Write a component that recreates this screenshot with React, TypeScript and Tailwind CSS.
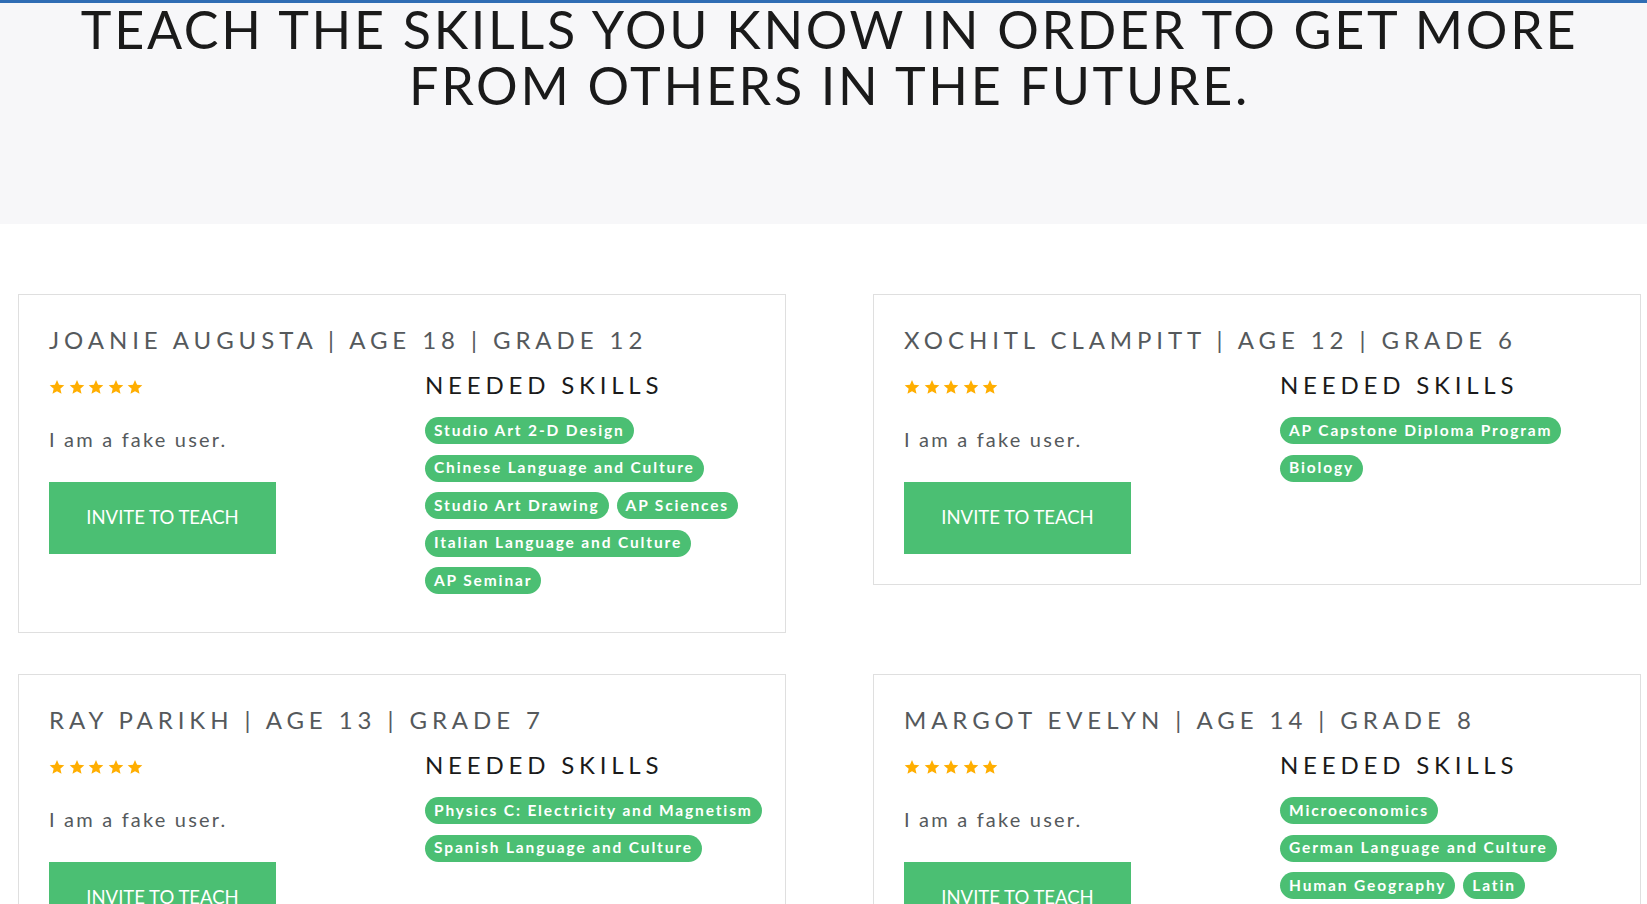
import React from "react";

interface Student {
  name: string;
  age: number;
  grade: number;
  bio: string;
  skills: string[];
}

const students: Student[] = [
  {
    name: "Joanie Augusta",
    age: 18,
    grade: 12,
    bio: "I am a fake user.",
    skills: [
      "Studio Art 2-D Design",
      "Chinese Language and Culture",
      "Studio Art Drawing",
      "AP Sciences",
      "Italian Language and Culture",
      "AP Seminar",
    ],
  },
  {
    name: "Xochitl Clampitt",
    age: 12,
    grade: 6,
    bio: "I am a fake user.",
    skills: ["AP Capstone Diploma Program", "Biology"],
  },
  {
    name: "Ray Parikh",
    age: 13,
    grade: 7,
    bio: "I am a fake user.",
    skills: ["Physics C: Electricity and Magnetism", "Spanish Language and Culture"],
  },
  {
    name: "Margot Evelyn",
    age: 14,
    grade: 8,
    bio: "I am a fake user.",
    skills: [
      "Microeconomics",
      "German Language and Culture",
      "Human Geography",
      "Latin",
    ],
  },
];

function Stars() {
  return (
    <div className="flex gap-[3.5px]">
      {[0, 1, 2, 3, 4].map((i) => (
        <svg key={i} width="16" height="16" viewBox="0 0 24 24" className="fill-[#ffae00]">
          <path d="M12 1.5l3.09 7.26 7.86.68-5.96 5.17 1.79 7.69L12 18.2l-6.78 4.1 1.79-7.69L1.05 9.44l7.86-.68z" />
        </svg>
      ))}
    </div>
  );
}

function StudentCard({ s }: { s: Student }) {
  return (
    <div className="border border-[#dfdfdf] bg-white px-[30px] pt-[30px] pb-[30px]">
      <h3 className="text-[24px] leading-[29px] uppercase tracking-[0.205em] text-[#55595c] whitespace-nowrap">
        {s.name} | Age {s.age} | Grade {s.grade}
      </h3>
      <div className="mt-[16px] grid grid-cols-[376px_1fr]">
        <div>
          <div className="pt-[9px]">
            <Stars />
          </div>
          <p className="mt-[29px] text-[20px] leading-[30px] tracking-[0.11em] text-[#55595c]">{s.bio}</p>
          <button className="mt-[28px] flex h-[72px] w-[227px] items-center justify-center bg-[#4bbf73] text-[18.5px] uppercase text-white">
            Invite to Teach
          </button>
        </div>
        <div>
          <h4 className="text-[24px] leading-[29px] uppercase tracking-[0.2em] text-[#1a1a1a]">Needed Skills</h4>
          <div className="mt-[18px] mb-[8px] flex flex-wrap gap-x-[8px] gap-y-[10.5px]">
            {s.skills.map((sk) => (
              <span
                key={sk}
                className="flex h-[27px] items-center rounded-full bg-[#4bbf73] px-[9px] text-[15.5px] font-bold tracking-[0.12em] text-white whitespace-nowrap"
              >
                {sk}
              </span>
            ))}
          </div>
        </div>
      </div>
    </div>
  );
}

export default function App() {
  return (
    <div className="min-h-screen bg-white font-['Lato',sans-serif] overflow-hidden">
      <div className="border-t-[3px] border-[#2f6db4] bg-[#f7f7f9] h-[224px]">
        <h1 className="-mt-[2px] pl-[12px] text-center text-[52px] leading-[56px] uppercase tracking-[0.052em] text-[#1a1a1a]">
          Teach the skills you know in order to get more from others in the future.
        </h1>
      </div>
      <div className="mt-[70px] grid grid-cols-[768px_768px] gap-x-[87px] gap-y-[41px] pl-[18px] items-start">
        {students.map((s) => (
          <StudentCard key={s.name} s={s} />
        ))}
      </div>
    </div>
  );
}
